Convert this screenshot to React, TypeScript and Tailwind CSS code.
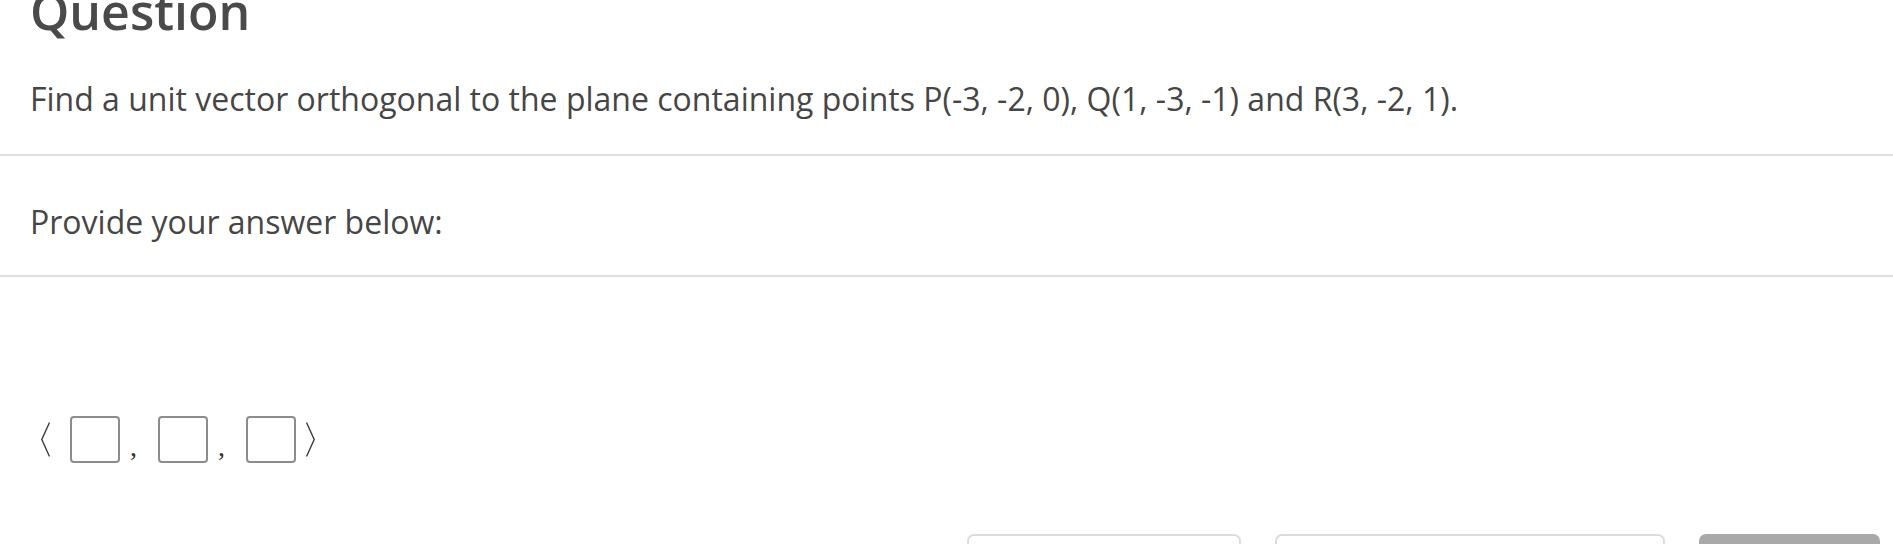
import React from "react";

function Bracket({ side }: { side: "left" | "right" }) {
  const points = side === "left" ? "8.5,0.5 0.8,17.5 8.5,34.5" : "0.5,0.5 8.2,17.5 0.5,34.5";
  return (
    <svg width="9" height="35" viewBox="0 0 9 35" className="shrink-0">
      <polyline points={points} fill="none" stroke="#3a3a3a" strokeWidth="1.4" />
    </svg>
  );
}

function AnswerBox() {
  return <div className="h-[47px] w-[50px] shrink-0 rounded-[4px] border-2 border-[#8c8c8c] bg-white" />;
}

function Comma() {
  return (
    <span className="ml-[10px] mr-[18px] mt-[14px] w-[10px] shrink-0 text-left font-['Liberation_Serif',serif] text-[28px] leading-none text-[#333]">
      ,
    </span>
  );
}

export default function App() {
  return (
    <div className="min-h-[544px] overflow-hidden bg-white font-['Open_Sans',sans-serif] text-[#464646]">
      <h1 className="mt-[-13px] px-[30px] text-[50px] font-semibold leading-[48px] text-[#4a4a4a]">Question</h1>

      <div className="border-b-2 border-[#dedede] px-[30px] pb-[33px] pt-[41px]">
        <p className="text-[32px] leading-[45px]">
          Find a unit vector orthogonal to the plane containing points P(-3, -2, 0), Q(1, -3, -1) and R(3, -2, 1).
        </p>
      </div>

      <div className="border-b-2 border-[#dedede] px-[30px] pb-[31px] pt-[43px]">
        <p className="text-[32px] leading-[45px]">Provide your answer below:</p>
      </div>

      <div className="flex items-center pl-[41px] pt-[139px]">
        <Bracket side="left" />
        <div className="ml-[20px] flex items-center">
          <AnswerBox />
          <Comma />
          <AnswerBox />
          <Comma />
          <AnswerBox />
        </div>
        <div className="ml-[10px]">
          <Bracket side="right" />
        </div>
      </div>

      <div className="flex justify-end gap-[34px] pr-[13px] pt-[71px]">
        <button className="h-[60px] w-[274px] rounded-[7px] border-2 border-[#dcdcdc] bg-white" />
        <button className="h-[60px] w-[390px] rounded-[7px] border-2 border-[#dcdcdc] bg-white" />
        <button className="h-[60px] w-[181px] rounded-[7px] bg-[#a9a9a9]" />
      </div>
    </div>
  );
}
